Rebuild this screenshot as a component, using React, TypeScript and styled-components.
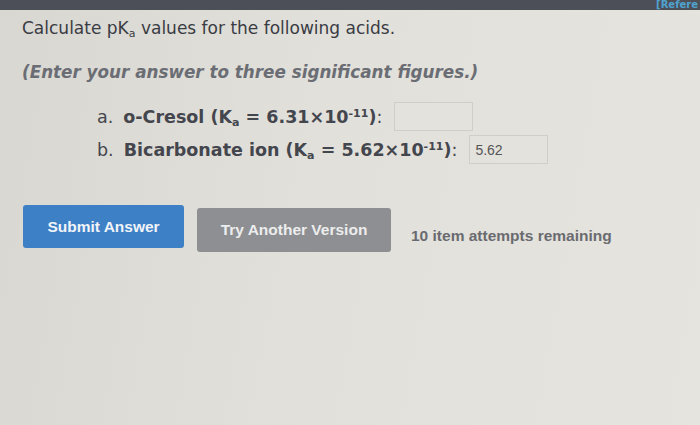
import React from 'react';
import styled, { createGlobalStyle } from 'styled-components';

const Global = createGlobalStyle`
  html, body {
    margin: 0;
    padding: 0;
    background: #dfddd7;
  }
`;

const Page = styled.div`
  width: 700px;
  height: 425px;
  overflow: hidden;
  background: linear-gradient(100deg, #d8d7d2 0%, #e2e0da 45%, #e6e4de 100%);
  font-family: 'DejaVu Sans', Verdana, sans-serif;
  color: #3c3e46;
`;

const TopBar = styled.div`
  height: 10px;
  background: #4d4f58;
  display: flex;
  justify-content: flex-end;
  align-items: center;
`;

const RefLink = styled.span`
  font-family: 'DejaVu Sans', sans-serif;
  font-weight: bold;
  font-size: 10px;
  line-height: 10px;
  color: #4fa3cf;
  margin-right: 2px;
`;

const Content = styled.div`
  padding: 7px 0 0 22px;
`;

const Title = styled.div`
  font-size: 17px;
  line-height: 22px;
  color: #3a3c44;
`;

const Sub = styled.sub`
  font-size: 11px;
  vertical-align: -3px;
  line-height: 0;
`;

const Sup = styled.sup`
  font-size: 11px;
  vertical-align: 6px;
  line-height: 0;
`;

const Note = styled.div`
  margin-top: 22px;
  font-size: 16.8px;
  line-height: 22px;
  font-weight: bold;
  font-style: italic;
  color: #6b6d74;
`;

const List = styled.div`
  margin-top: 19px;
  padding-left: 75px;
  display: flex;
  flex-direction: column;
  gap: 4px;
`;

const Item = styled.div`
  display: flex;
  align-items: center;
  font-size: 17.5px;
  color: #44464e;
`;

const Letter = styled.span`
  margin-right: 10px;
`;

const Label = styled.span`
  font-weight: bold;
`;

const Colon = styled.span`
  margin-right: 12px;
`;

const AnswerBox = styled.div`
  width: 79px;
  height: 29px;
  border: 1px solid #d0cec8;
  background: #e4e2dc;
  box-sizing: border-box;
  font-family: 'Liberation Sans', Arial, sans-serif;
  font-size: 14px;
  color: #555;
  display: flex;
  align-items: center;
  padding-left: 5px;
`;

const Actions = styled.div`
  margin-top: 41px;
  margin-left: 1px;
  display: flex;
  align-items: flex-start;
  gap: 13px;
`;

const Button = styled.div<{ $tone: 'blue' | 'gray' }>`
  height: ${(p) => (p.$tone === 'blue' ? '43px' : '44px')};
  margin-top: ${(p) => (p.$tone === 'blue' ? '0' : '3px')};
  width: ${(p) => (p.$tone === 'blue' ? '161px' : '194px')};
  border-radius: 3px;
  display: flex;
  align-items: center;
  justify-content: center;
  font-family: 'Liberation Sans', Arial, sans-serif;
  font-size: 15.5px;
  font-weight: bold;
  color: ${(p) => (p.$tone === 'blue' ? '#f1f4f8' : '#eceded')};
  background: ${(p) => (p.$tone === 'blue' ? '#3d80c6' : '#8e8f92')};
`;

const Attempts = styled.span`
  margin-left: 7px;
  margin-top: 22px;
  font-family: 'Liberation Sans', Arial, sans-serif;
  font-size: 15.5px;
  font-weight: bold;
  color: #6a6b70;
`;

export default function App() {
  return (
    <Page>
      <Global />
      <TopBar>
        <RefLink>[Refere</RefLink>
      </TopBar>
      <Content>
        <Title>
          Calculate pK<Sub>a</Sub> values for the following acids.
        </Title>
        <Note>(Enter your answer to three significant figures.)</Note>
        <List>
          <Item>
            <Letter>a.</Letter>
            <Label>
              o-Cresol (K<Sub>a</Sub> = 6.31×10<Sup>-11</Sup>)
            </Label>
            <Colon>:</Colon>
            <AnswerBox />
          </Item>
          <Item>
            <Letter>b.</Letter>
            <Label>
              Bicarbonate ion (K<Sub>a</Sub> = 5.62×10<Sup>-11</Sup>)
            </Label>
            <Colon>:</Colon>
            <AnswerBox>5.62</AnswerBox>
          </Item>
        </List>
        <Actions>
          <Button $tone="blue">Submit Answer</Button>
          <Button $tone="gray">Try Another Version</Button>
          <Attempts>10 item attempts remaining</Attempts>
        </Actions>
      </Content>
    </Page>
  );
}
